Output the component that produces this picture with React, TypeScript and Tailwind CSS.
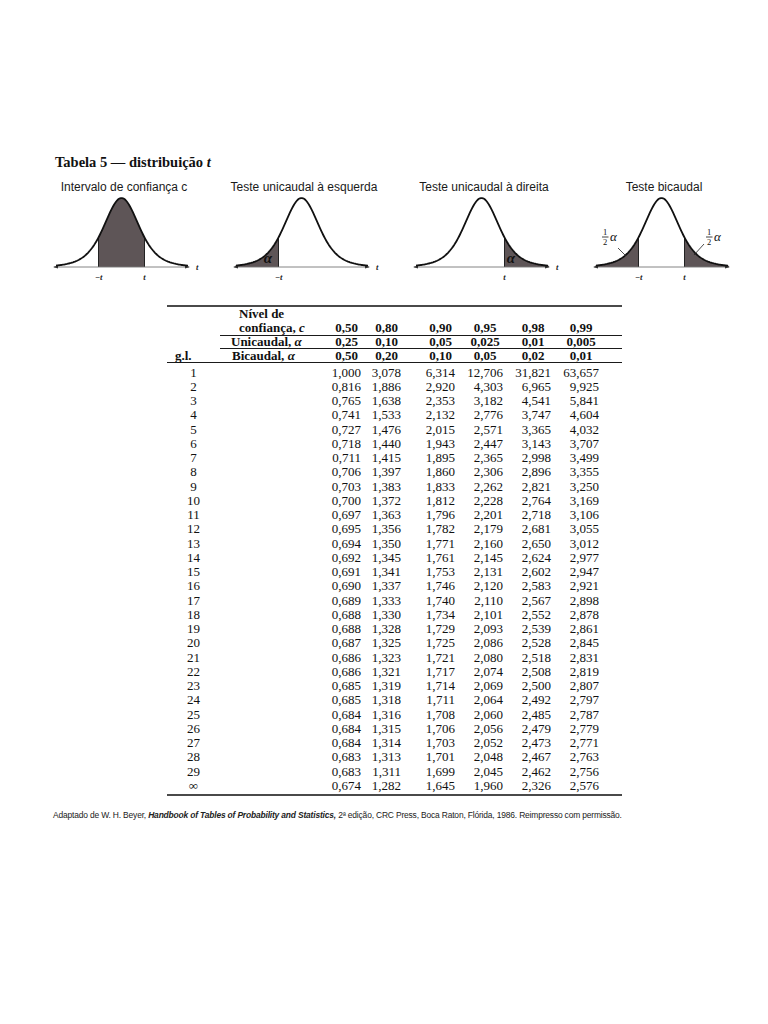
import React from 'react';

const MU = 68.5;
const T = 23;
const AXIS = 73;

const fy = (x: number) => AXIS - 69 * Math.pow(1 + ((x - MU) / 18) ** 2 / 5, -3);

const curvePts = (a: number, b: number) => {
    const pts: string[] = [];
    for (let x = a; x <= b; x += 1) pts.push(`${x.toFixed(1)},${fy(x).toFixed(2)}`);
    pts.push(`${b.toFixed(1)},${fy(b).toFixed(2)}`);
    return pts;
};

const area = (a: number, b: number) => `M${a},${AXIS} L${curvePts(a, b).join(' L')} L${b},${AXIS} Z`;

const Half = ({ x, y }: { x: number; y: number }) => (
    <g fontFamily="'Liberation Serif', serif" fill="#111">
        <text x={x + 3} y={y} fontSize="8.5" textAnchor="middle">1</text>
        <line x1={x} y1={y + 2} x2={x + 6.5} y2={y + 2} stroke="#111" strokeWidth="0.8" />
        <text x={x + 3} y={y + 9.5} fontSize="8.5" textAnchor="middle">2</text>
        <text x={x + 8} y={y + 6} fontSize="13" fontStyle="italic">α</text>
    </g>
);

const Curve = ({ kind }: { kind: 'center' | 'left' | 'right' | 'both' }) => {
    const lo = MU - T;
    const hi = MU + T;
    return (
        <svg width="160" height="90" viewBox="0 0 160 90" className="block overflow-visible">
            {kind === 'center' && <path d={area(lo, hi)} fill="#5e5557" />}
            {(kind === 'left' || kind === 'both') && <path d={area(2, lo)} fill="#5e5557" />}
            {(kind === 'right' || kind === 'both') && <path d={area(hi, 136)} fill="#5e5557" />}
            {(kind === 'center' || kind === 'left' || kind === 'both') && (
                <line x1={lo} y1={AXIS} x2={lo} y2={fy(lo)} stroke="#222" strokeWidth="1" />
            )}
            {(kind === 'center' || kind === 'right' || kind === 'both') && (
                <line x1={hi} y1={AXIS} x2={hi} y2={fy(hi)} stroke="#222" strokeWidth="1" />
            )}
            <line x1="1" y1={AXIS} x2="136" y2={AXIS} stroke="#777" strokeWidth="0.9" />
            <polygon points={`0,${AXIS} 5,${AXIS - 1.6} 5,${AXIS + 1.6}`} fill="#333" />
            <polygon points={`137,${AXIS} 132,${AXIS - 1.6} 132,${AXIS + 1.6}`} fill="#333" />
            <path d={`M${curvePts(3, 135).join(' L')}`} fill="none" stroke="#111" strokeWidth="1.8" />
            <g fontFamily="'Liberation Serif', serif" fontStyle="italic" fontSize="8.5" fontWeight="700" fill="#222">
                {kind !== 'both' && <text x="143" y={AXIS + 3}>t</text>}
                {(kind === 'center' || kind === 'left' || kind === 'both') && (
                    <text x={lo} y={AXIS + 13} textAnchor="middle">−t</text>
                )}
                {(kind === 'center' || kind === 'right' || kind === 'both') && (
                    <text x={hi} y={AXIS + 13} textAnchor="middle">t</text>
                )}
            </g>
            {kind === 'left' && (
                <text x="35" y="69" fontFamily="'Liberation Serif', serif" fontStyle="italic" fontWeight="700" fontSize="15" fill="#111" textAnchor="middle">α</text>
            )}
            {kind === 'right' && (
                <text x="98" y="69" fontFamily="'Liberation Serif', serif" fontStyle="italic" fontWeight="700" fontSize="15" fill="#111" textAnchor="middle">α</text>
            )}
            {kind === 'both' && (
                <>
                    <Half x={9} y={41} />
                    <line x1="25" y1="54" x2="33" y2="62" stroke="#222" strokeWidth="0.8" />
                    <Half x={113} y={41} />
                    <line x1="111" y1="50" x2="101" y2="61" stroke="#222" strokeWidth="0.8" />
                </>
            )}
        </svg>
    );
};

const curves: { label: string; kind: 'center' | 'left' | 'right' | 'both' }[] = [
    { label: 'Intervalo de confiança c', kind: 'center' },
    { label: 'Teste unicaudal à esquerda', kind: 'left' },
    { label: 'Teste unicaudal à direita', kind: 'right' },
    { label: 'Teste bicaudal', kind: 'both' },
];

const rows: [string, string[]][] = [
    ['1', ['1,000', '3,078', '6,314', '12,706', '31,821', '63,657']],
    ['2', ['0,816', '1,886', '2,920', '4,303', '6,965', '9,925']],
    ['3', ['0,765', '1,638', '2,353', '3,182', '4,541', '5,841']],
    ['4', ['0,741', '1,533', '2,132', '2,776', '3,747', '4,604']],
    ['5', ['0,727', '1,476', '2,015', '2,571', '3,365', '4,032']],
    ['6', ['0,718', '1,440', '1,943', '2,447', '3,143', '3,707']],
    ['7', ['0,711', '1,415', '1,895', '2,365', '2,998', '3,499']],
    ['8', ['0,706', '1,397', '1,860', '2,306', '2,896', '3,355']],
    ['9', ['0,703', '1,383', '1,833', '2,262', '2,821', '3,250']],
    ['10', ['0,700', '1,372', '1,812', '2,228', '2,764', '3,169']],
    ['11', ['0,697', '1,363', '1,796', '2,201', '2,718', '3,106']],
    ['12', ['0,695', '1,356', '1,782', '2,179', '2,681', '3,055']],
    ['13', ['0,694', '1,350', '1,771', '2,160', '2,650', '3,012']],
    ['14', ['0,692', '1,345', '1,761', '2,145', '2,624', '2,977']],
    ['15', ['0,691', '1,341', '1,753', '2,131', '2,602', '2,947']],
    ['16', ['0,690', '1,337', '1,746', '2,120', '2,583', '2,921']],
    ['17', ['0,689', '1,333', '1,740', '2,110', '2,567', '2,898']],
    ['18', ['0,688', '1,330', '1,734', '2,101', '2,552', '2,878']],
    ['19', ['0,688', '1,328', '1,729', '2,093', '2,539', '2,861']],
    ['20', ['0,687', '1,325', '1,725', '2,086', '2,528', '2,845']],
    ['21', ['0,686', '1,323', '1,721', '2,080', '2,518', '2,831']],
    ['22', ['0,686', '1,321', '1,717', '2,074', '2,508', '2,819']],
    ['23', ['0,685', '1,319', '1,714', '2,069', '2,500', '2,807']],
    ['24', ['0,685', '1,318', '1,711', '2,064', '2,492', '2,797']],
    ['25', ['0,684', '1,316', '1,708', '2,060', '2,485', '2,787']],
    ['26', ['0,684', '1,315', '1,706', '2,056', '2,479', '2,779']],
    ['27', ['0,684', '1,314', '1,703', '2,052', '2,473', '2,771']],
    ['28', ['0,683', '1,313', '1,701', '2,048', '2,467', '2,763']],
    ['29', ['0,683', '1,311', '1,699', '2,045', '2,462', '2,756']],
    ['∞', ['0,674', '1,282', '1,645', '1,960', '2,326', '2,576']],
];

// column widths after the label column, and the widest entry in each
const colW = ['w-[36px]', 'w-[40px]', 'w-[54px]', 'w-[48px]', 'w-[48px]', 'w-[48px]'];
const wideW = ['w-[29px]', 'w-[29px]', 'w-[29px]', 'w-[36px]', 'w-[36px]', 'w-[36px]'];

const HeadVals = ({ vals }: { vals: string[] }) => (
    <>
        {vals.map((v, i) => (
            <div key={i} className={`${colW[i]} flex justify-end`}>
                <div className={`${wideW[i]} text-center whitespace-nowrap`}>{v}</div>
            </div>
        ))}
    </>
);

const App = () => {
    return (
        <div className="min-h-screen bg-white text-[#111] pl-[53px] pt-[154px]">
            {/* Title */}
            <h1 className="text-[14.5px] leading-[17px] font-bold font-['Liberation_Serif',serif] pl-[2px]">
                Tabela 5 — distribuição <i>t</i>
            </h1>

            {/* Curves */}
            <div className="flex mt-[10px]">
                {curves.map((c) => (
                    <div key={c.label} className="w-[180px] shrink-0">
                        <div className="w-[142px] flex justify-center">
                            <span className="whitespace-nowrap text-[12px] leading-[13px] font-['Liberation_Sans',sans-serif] text-[#1a1a1a]">
                                {c.label}
                            </span>
                        </div>
                        <Curve kind={c.kind} />
                    </div>
                ))}
            </div>

            {/* Table */}
            <div className="ml-[114px] mt-[21px] w-[455px] font-['Liberation_Serif',serif] text-[13px] border-t-2 border-b-2 border-[#4a4a4a]">
                <div className="flex h-[14px] items-center font-bold">
                    <div className="w-[53px]" />
                    <div className="pl-[19px]">Nível de</div>
                </div>
                <div className="flex h-[15px] items-center font-bold">
                    <div className="w-[53px]" />
                    <div className="flex w-[402px] h-full items-center border-b border-[#1a1a1a]">
                        <div className="w-[105px] pl-[19px]">confiança, <i>c</i></div>
                        <HeadVals vals={['0,50', '0,80', '0,90', '0,95', '0,98', '0,99']} />
                    </div>
                </div>
                <div className="flex h-[13px] items-center font-bold">
                    <div className="w-[53px]" />
                    <div className="flex w-[402px] h-full items-center border-b border-[#1a1a1a]">
                        <div className="w-[105px] pl-[11px]">Unicaudal, <i>α</i></div>
                        <HeadVals vals={['0,25', '0,10', '0,05', '0,025', '0,01', '0,005']} />
                    </div>
                </div>
                <div className="flex h-[14px] items-center font-bold border-b border-[#1a1a1a]">
                    <div className="w-[53px] pl-[8px] text-left">g.l.</div>
                    <div className="flex w-[402px] items-center">
                        <div className="w-[105px] pl-[12px]">Bicaudal, <i>α</i></div>
                        <HeadVals vals={['0,50', '0,20', '0,10', '0,05', '0,02', '0,01']} />
                    </div>
                </div>
                <div className="pt-[2px] pb-[1px]">
                    {rows.map(([gl, vals]) => (
                        <div key={gl} className="flex h-[14.25px] items-center leading-none">
                            <div className="w-[53px] text-center">{gl}</div>
                            <div className="w-[105px]" />
                            {vals.map((v, i) => (
                                <div key={i} className={`${colW[i]} text-right`}>{v}</div>
                            ))}
                        </div>
                    ))}
                </div>
            </div>

            {/* Source */}
            <p className="mt-[14px] text-[8.45px] leading-[10px] tracking-[-0.17px] font-['Liberation_Sans',sans-serif] text-[#222] whitespace-nowrap">
                Adaptado de W. H. Beyer, <b><i>Handbook of Tables of Probability and Statistics,</i></b> 2ª edição, CRC Press, Boca Raton, Flórida, 1986. Reimpresso com permissão.
            </p>
        </div>
    );
};

export default App;
